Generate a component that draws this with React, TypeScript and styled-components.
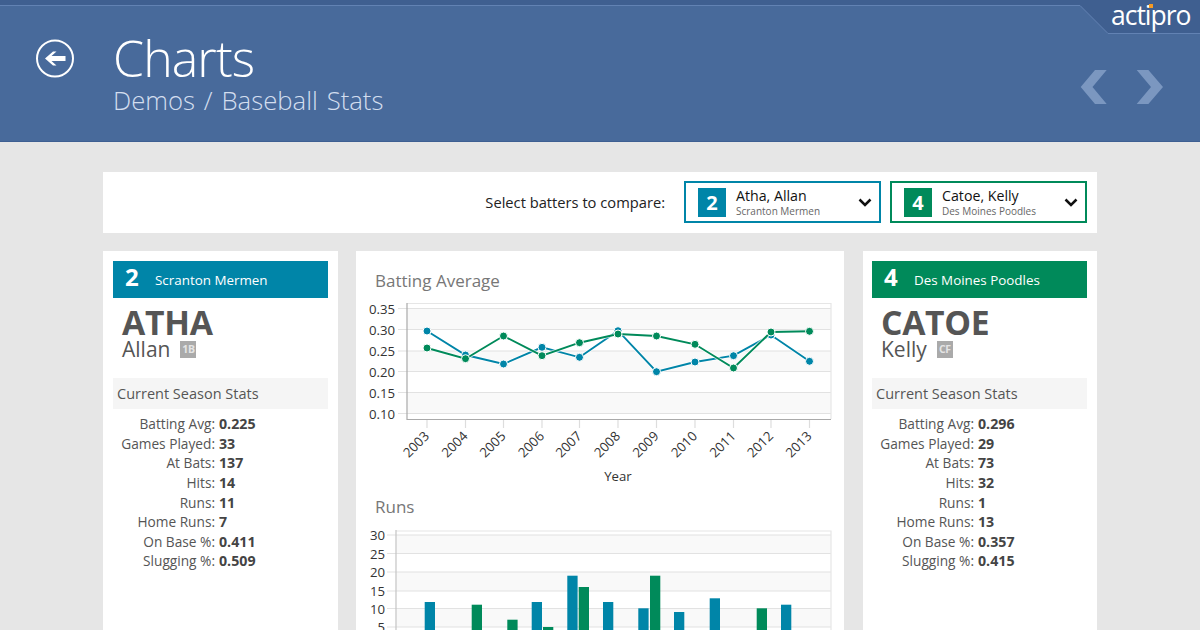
import React from "react";
import styled, { createGlobalStyle } from "styled-components";

const TEAL = "#0085a8";
const GREEN = "#008a5a";
const FONT = `"Open Sans", "Noto Sans", "Liberation Sans", sans-serif`;

const Global = createGlobalStyle`
  html, body { margin: 0; padding: 0; background: #e6e6e6; }
  body { font-family: ${FONT}; }
`;

const Page = styled.div`
  width: 1200px;
  height: 630px;
  overflow: hidden;
  display: flex;
  flex-direction: column;
  background: #e6e6e6;
`;

const Header = styled.header`
  position: relative;
  flex: 0 0 142px;
  box-sizing: border-box;
  display: flex;
  padding-left: 36px;
  background: #486a9b;
  border-bottom: 1px solid #3e5f92;
  color: #fff;
`;

const HeaderTrim = styled.svg`
  position: absolute;
  left: 0;
  top: 0;
`;

const BackIcon = styled.svg`
  flex: 0 0 auto;
  margin-top: 39px;
`;

const TitleBlock = styled.div`
  margin-left: 39px;
  padding-top: 31px;
  display: flex;
  flex-direction: column;
`;

const Title = styled.div`
  font-size: 50px;
  font-weight: 300;
  line-height: 55px;
  letter-spacing: -0.9px;
`;

const Subtitle = styled.div`
  font-size: 25.7px;
  font-weight: 300;
  line-height: 30px;
  word-spacing: 2.2px;
  color: #d3deef;
`;

const Logo = styled.div`
  position: absolute;
  left: 1111px;
  top: 1px;
  font-size: 26.5px;
  font-weight: 400;
  letter-spacing: -1px;
  line-height: 28px;
  color: #fff;
`;

const LogoDot = styled.span`
  position: absolute;
  left: 38px;
  top: 3px;
  width: 4px;
  height: 4px;
  background: #f59a23;
`;

const NavArrows = styled.svg`
  position: absolute;
  left: 1078px;
  top: 68px;
`;

const Content = styled.main`
  flex: 1;
  min-height: 0;
  display: flex;
  flex-direction: column;
  gap: 18px;
  padding: 30px 103px 0;
`;

const Toolbar = styled.div`
  flex: 0 0 61px;
  box-sizing: border-box;
  display: flex;
  align-items: center;
  justify-content: flex-end;
  padding: 0 10px 1px 0;
  background: #fff;
`;

const ToolbarLabel = styled.span`
  font-size: 14.7px;
  color: #222;
  margin-right: 10px;
`;

const Select = styled.div<{ $color: string }>`
  box-sizing: border-box;
  width: 197px;
  height: 42px;
  margin-left: 9px;
  padding: 0 7px 0 12px;
  display: flex;
  align-items: center;
  border: 2px solid ${(p) => p.$color};
`;

const SelectBadge = styled.div<{ $color: string }>`
  width: 28px;
  height: 29px;
  display: flex;
  align-items: center;
  justify-content: center;
  font-size: 20px;
  font-weight: 700;
  color: #fff;
  background: ${(p) => p.$color};
`;

const SelectText = styled.div`
  flex: 1;
  margin-left: 10px;
  display: flex;
  flex-direction: column;
`;

const SelectName = styled.span`
  font-size: 14.2px;
  line-height: 17px;
  color: #111;
`;

const SelectTeam = styled.span`
  font-size: 10px;
  line-height: 12px;
  margin-top: 1px;
  color: #666;
`;

const Columns = styled.div`
  flex: 1;
  min-height: 0;
  display: flex;
`;

const SidePanel = styled.section<{ $pad: number; $width: number }>`
  box-sizing: border-box;
  width: ${(p) => p.$width}px;
  padding: 10px 10px 0 ${(p) => p.$pad}px;
  background: #fff;
`;

const TeamBar = styled.div<{ $color: string }>`
  height: 37px;
  padding-left: 12px;
  display: flex;
  align-items: center;
  color: #fff;
  background: ${(p) => p.$color};
`;

const TeamNum = styled.span`
  font-size: 24px;
  font-weight: 700;
  line-height: 30px;
  width: 30px;
  margin-top: -5px;
`;

const TeamName = styled.span`
  font-size: 13.4px;
  margin-top: 1px;
`;

const NameBlock = styled.div`
  padding: 8px 0 0 9px;
  height: 75px;
  box-sizing: border-box;
  color: #555;
`;

const LastName = styled.div`
  font-size: 33.7px;
  font-weight: 700;
  line-height: 32px;
  letter-spacing: -0.3px;
`;

const FirstNameRow = styled.div`
  display: flex;
  align-items: center;
  height: 22px;
`;

const FirstName = styled.span`
  font-size: 21px;
  line-height: 22px;
`;

const PosBadge = styled.span`
  width: 16px;
  height: 17px;
  margin-left: 10px;
  display: flex;
  align-items: center;
  justify-content: center;
  font-size: 10.5px;
  font-weight: 700;
  letter-spacing: -0.4px;
  color: #e4e4e4;
  background: #aaa;
`;

const StatsTitle = styled.div`
  height: 31px;
  margin-top: 5px;
  padding-left: 4px;
  display: flex;
  align-items: center;
  font-size: 14.5px;
  color: #555;
  background: #f5f5f5;
`;

const StatsGrid = styled.div`
  margin-top: 5px;
  display: grid;
  grid-template-columns: 102px 1fr;
  column-gap: 4px;
  grid-auto-rows: 19.6px;
  align-items: center;
`;

const StatLabel = styled.span`
  font-size: 13.7px;
  text-align: right;
  white-space: nowrap;
  color: #555;
`;

const StatValue = styled.span`
  font-size: 14.2px;
  font-weight: 700;
  color: #444;
`;

const CenterPanel = styled.section`
  width: 488px;
  margin: 0 19px 0 18px;
  background: #fff;
  overflow: hidden;
`;

const ChartTitle = styled.h2<{ $top: number; $after: number }>`
  margin: ${(p) => p.$top}px 0 ${(p) => p.$after}px 19px;
  font-size: 17px;
  font-weight: 400;
  line-height: 24px;
  color: #777;
`;

const ChartSvg = styled.svg`
  display: block;
`;

const AxisText = styled.text`
  font-family: ${FONT};
  font-size: 13.2px;
  fill: #333;
`;

const BackArrow = () => (
  <BackIcon width="38" height="39" viewBox="0 0 38 39">
    <circle cx="19" cy="19.5" r="18" fill="none" stroke="#fff" strokeWidth="2" />
    <path d="M9 19.5 L17 12.5 H20.5 L15.5 17 H29.5 V22 H15.5 L20.5 26.5 H17 Z" fill="#fff" />
  </BackIcon>
);

const Chevron = () => (
  <svg width="14" height="9" viewBox="0 0 14 9">
    <path d="M1.5 1.5 L7 7 L12.5 1.5" fill="none" stroke="#111" strokeWidth="2.5" />
  </svg>
);

type Player = {
  num: string;
  team: string;
  last: string;
  first: string;
  pos: string;
  color: string;
  pad: number;
  width: number;
  stats: [string, string][];
};

const labels = ["Batting Avg:", "Games Played:", "At Bats:", "Hits:", "Runs:", "Home Runs:", "On Base %:", "Slugging %:"];
const withLabels = (v: string[]) => labels.map((l, i) => [l, v[i]] as [string, string]);

const atha: Player = {
  num: "2", team: "Scranton Mermen", last: "ATHA", first: "Allan", pos: "1B", color: TEAL, pad: 10, width: 235,
  stats: withLabels(["0.225", "33", "137", "14", "11", "7", "0.411", "0.509"]),
};
const catoe: Player = {
  num: "4", team: "Des Moines Poodles", last: "CATOE", first: "Kelly", pos: "CF", color: GREEN, pad: 9, width: 234,
  stats: withLabels(["0.296", "29", "73", "32", "1", "13", "0.357", "0.415"]),
};

const Side = ({ p }: { p: Player }) => (
  <SidePanel $pad={p.pad} $width={p.width}>
    <TeamBar $color={p.color}>
      <TeamNum>{p.num}</TeamNum>
      <TeamName>{p.team}</TeamName>
    </TeamBar>
    <NameBlock>
      <LastName>{p.last}</LastName>
      <FirstNameRow>
        <FirstName>{p.first}</FirstName>
        <PosBadge>{p.pos}</PosBadge>
      </FirstNameRow>
    </NameBlock>
    <StatsTitle>Current Season Stats</StatsTitle>
    <StatsGrid>
      {p.stats.map(([l, v]) => (
        <React.Fragment key={l}>
          <StatLabel>{l}</StatLabel>
          <StatValue>{v}</StatValue>
        </React.Fragment>
      ))}
    </StatsGrid>
  </SidePanel>
);

const Picker = ({ p, name }: { p: Player; name: string }) => (
  <Select $color={p.color}>
    <SelectBadge $color={p.color}>{p.num}</SelectBadge>
    <SelectText>
      <SelectName>{name}</SelectName>
      <SelectTeam>{p.team}</SelectTeam>
    </SelectText>
    <Chevron />
  </Select>
);

const years = [2003, 2004, 2005, 2006, 2007, 2008, 2009, 2010, 2011, 2012, 2013];
const xs = [427, 465.5, 503.5, 542, 579.5, 618, 656.5, 695, 733.5, 771, 809.5];
const blueY = [331, 355, 364, 347.3, 357.3, 330.7, 371.7, 362, 355.7, 335, 361.3];
const greenY = [348, 358.7, 336, 355.7, 342.7, 334, 336, 344.3, 368, 332, 331.3];

const Bands = ({ x0, x1, ys, labels: ls, tick, textX }: { x0: number; x1: number; ys: number[]; labels: string[]; tick: number; textX: number }) => (
  <>
    {ys.slice(0, -1).map((y, i) =>
      i % 2 === 0 ? <rect key={y} x={x0} y={y} width={x1 - x0} height={ys[i + 1] - y} fill="#f9f9f9" /> : null
    )}
    {ys.map((y, i) => (
      <React.Fragment key={y}>
        <line x1={tick} x2={x1} y1={y} y2={y} stroke="#e2e2e2" strokeWidth="1.2" />
        <AxisText x={textX} y={y + 5} textAnchor="end">{ls[i]}</AxisText>
      </React.Fragment>
    ))}
  </>
);

const pts = (ys: number[]) => xs.map((x, i) => `${x},${ys[i]}`).join(" ");

const Series = ({ ys, color }: { ys: number[]; color: string }) => (
  <>
    <polyline points={pts(ys)} fill="none" stroke="#fff" strokeWidth="3.6" opacity="0.7" />
    <polyline points={pts(ys)} fill="none" stroke={color} strokeWidth="1.9" />
    {xs.map((x, i) => (
      <circle key={x} cx={x} cy={ys[i]} r="4" fill={color} stroke="#fff" strokeWidth="1" />
    ))}
  </>
);

const LineChart = () => (
  <ChartSvg width="488" height="195" viewBox="356 295 488 195">
    <Bands x0={407} x1={831} tick={398} textX={395}
      ys={[308.5, 329.5, 351, 371.5, 392.5, 413.5]}
      labels={["0.35", "0.30", "0.25", "0.20", "0.15", "0.10"]} />
    <path d="M407 303.5 H831 V419" fill="none" stroke="#e6e6e6" strokeWidth="1.2" />
    <path d="M407 303 V419.5 H831" fill="none" stroke="#aaa" strokeWidth="1.2" />
    {xs.map((x, i) => (
      <React.Fragment key={x}>
        <line x1={x} x2={x} y1={420} y2={428} stroke="#ddd" strokeWidth="1.2" />
        <AxisText x={x + 3} y={437} textAnchor="end" transform={`rotate(-45 ${x + 3} 437)`}>{years[i]}</AxisText>
      </React.Fragment>
    ))}
    <AxisText x={618} y={481} textAnchor="middle">Year</AxisText>
    <Series ys={blueY} color={TEAL} />
    <Series ys={greenY} color={GREEN} />
  </ChartSvg>
);

const bars: [number, number, string][] = [
  [424.7, 602, TEAL], [471.7, 604.7, GREEN], [507.3, 619.7, GREEN], [531.7, 602, TEAL], [543, 627, GREEN],
  [567.3, 575.7, TEAL], [578.7, 587, GREEN], [603, 602, TEAL], [638.3, 608.3, TEAL], [650, 575.7, GREEN],
  [674, 612, TEAL], [709.7, 598.3, TEAL], [756.7, 608.3, GREEN], [781, 604.7, TEAL],
];

const BarChart = () => (
  <ChartSvg width="488" height="110" viewBox="356 525 488 110">
    <Bands x0={396} x1={831} tick={387} textX={385}
      ys={[535, 553.5, 572, 591, 608.5, 627]}
      labels={["30", "25", "20", "15", "10", "5"]} />
    <path d="M396 531 H831 V640" fill="none" stroke="#e6e6e6" strokeWidth="1.2" />
    <path d="M396 530 V640" fill="none" stroke="#c4c4c4" strokeWidth="1.2" />
    {bars.map(([x, y, c]) => (
      <rect key={x} x={x} y={y} width={10.3} height={640 - y} fill={c} />
    ))}
  </ChartSvg>
);

export default function App() {
  return (
    <Page>
      <Global />
      <Header>
        <HeaderTrim width="1200" height="40" viewBox="0 0 1200 40">
          <path d="M0 0 H1200 V33.5 H1108 L1080 5.5 H0 Z" fill="#3f5f90" />
          <path d="M0 5.5 H1080 L1108 33.5 H1200" fill="none" stroke="#6282b3" strokeWidth="1" />
        </HeaderTrim>
        <BackArrow />
        <TitleBlock>
          <Title>Charts</Title>
          <Subtitle>Demos / Baseball Stats</Subtitle>
        </TitleBlock>
        <Logo>
          actipro
          <LogoDot />
        </Logo>
        <NavArrows width="88" height="38" viewBox="1078 68 88 38">
          <path d="M1095 70 H1106.7 L1092.5 87 L1106.7 104 H1095 L1080.7 87 Z" fill="#7b97c0" />
          <path d="M1136.7 70 H1148.4 L1163 87 L1148.4 104 H1136.7 L1151 87 Z" fill="#7b97c0" />
        </NavArrows>
      </Header>
      <Content>
        <Toolbar>
          <ToolbarLabel>Select batters to compare:</ToolbarLabel>
          <Picker p={atha} name="Atha, Allan" />
          <Picker p={catoe} name="Catoe, Kelly" />
        </Toolbar>
        <Columns>
          <Side p={atha} />
          <CenterPanel>
            <ChartTitle $top={18} $after={2}>Batting Average</ChartTitle>
            <LineChart />
            <ChartTitle $top={5} $after={6}>Runs</ChartTitle>
            <BarChart />
          </CenterPanel>
          <Side p={catoe} />
        </Columns>
      </Content>
    </Page>
  );
}
